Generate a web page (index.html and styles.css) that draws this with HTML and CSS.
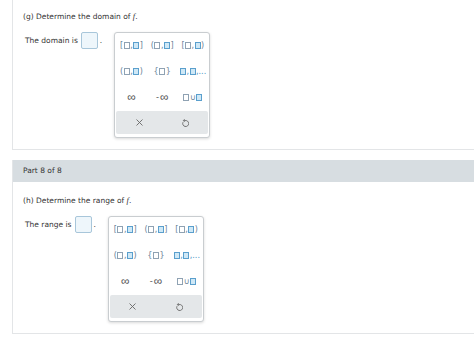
FILE: index.html
```html
<!DOCTYPE html>
<html lang="en">
<head>
  <meta charset="UTF-8">
  <title>Part 8 of 8</title>
  <link rel="stylesheet" href="styles.css">
</head>
<body>
  <div class="card cut">
    <div class="inner">
      <p class="q">(g) Determine the domain of <i>f</i>.</p>
      <div class="ans">
        <span class="lbl">The domain is</span><span class="inp"></span><span class="dot">.</span>
        <div class="pad">
          <div class="grid">
            <span class="sym">[<i class="bx"></i>,<i class="bx on"></i>]</span>
            <span class="sym">(<i class="bx"></i>,<i class="bx on"></i>]</span>
            <span class="sym">[<i class="bx"></i>,<i class="bx on"></i>)</span>
            <span class="sym">(<i class="bx"></i>,<i class="bx on"></i>)</span>
            <span class="sym">{<i class="bx"></i>}</span>
            <span class="sym blue"><i class="bx on"></i>,<i class="bx on"></i>,...</span>
            <span class="sym inf">&infin;</span>
            <span class="sym inf"><span class="minus">-</span>&infin;</span>
            <span class="sym"><i class="bx"></i>&cup;<i class="bx on"></i></span>
          </div>
          <div class="bar">
            <span class="btn">
              <svg width="7" height="7" viewBox="0 0 7 7"><path d="M0.5 0.5L6.5 6.5M6.5 0.5L0.5 6.5" stroke="#666" stroke-width="0.9" fill="none"/></svg>
            </span>
            <span class="btn">
              <svg width="8" height="9" viewBox="0 0 8 9"><path d="M2 4.2A3 3 0 1 0 4 2.6H2.6" stroke="#666" stroke-width="0.9" fill="none"/><path d="M3.6 1.2L2.4 2.6L3.6 3.9" stroke="#666" stroke-width="0.9" fill="none"/></svg>
            </span>
          </div>
        </div>
      </div>
    </div>
  </div>

  <div class="card">
    <div class="head">Part 8 of 8</div>
    <div class="inner">
      <p class="q">(h) Determine the range of <i>f</i>.</p>
      <div class="ans">
        <span class="lbl">The range is</span><span class="inp"></span><span class="dot">.</span>
        <div class="pad">
          <div class="grid">
            <span class="sym">[<i class="bx"></i>,<i class="bx on"></i>]</span>
            <span class="sym">(<i class="bx"></i>,<i class="bx on"></i>]</span>
            <span class="sym">[<i class="bx"></i>,<i class="bx on"></i>)</span>
            <span class="sym">(<i class="bx"></i>,<i class="bx on"></i>)</span>
            <span class="sym">{<i class="bx"></i>}</span>
            <span class="sym blue"><i class="bx on"></i>,<i class="bx on"></i>,...</span>
            <span class="sym inf">&infin;</span>
            <span class="sym inf"><span class="minus">-</span>&infin;</span>
            <span class="sym"><i class="bx"></i>&cup;<i class="bx on"></i></span>
          </div>
          <div class="bar">
            <span class="btn">
              <svg width="7" height="7" viewBox="0 0 7 7"><path d="M0.5 0.5L6.5 6.5M6.5 0.5L0.5 6.5" stroke="#666" stroke-width="0.9" fill="none"/></svg>
            </span>
            <span class="btn">
              <svg width="8" height="9" viewBox="0 0 8 9"><path d="M2 4.2A3 3 0 1 0 4 2.6H2.6" stroke="#666" stroke-width="0.9" fill="none"/><path d="M3.6 1.2L2.4 2.6L3.6 3.9" stroke="#666" stroke-width="0.9" fill="none"/></svg>
            </span>
          </div>
        </div>
      </div>
    </div>
  </div>
</body>
</html>
```

FILE: styles.css
```css
body {
  margin: 0;
  background-color: #ffffff;
  font-family: "DejaVu Sans", Verdana, sans-serif;
  font-size: 7.5px;
  color: #333333;
}
.card {
  margin-left: 12px;
  width: 461px;
  border: 1px solid #e3e5e7;
  border-right: none;
  margin-bottom: 10px;
}
.card.cut {
  border-top: none;
}
.inner {
  padding: 11px 10px 11px 10px;
}
.card .head + .inner {
  padding-top: 13px;
}
.head {
  background-color: #d7dde1;
  height: 22px;
  line-height: 22px;
  padding-left: 10px;
  margin-top: -1px;
}
.q {
  margin: 0;
  line-height: 10px;
}
.q i {
  font-family: "Liberation Serif", serif;
  font-size: 8.5px;
}
.ans {
  display: flex;
  align-items: flex-start;
  margin-top: 10px;
  padding-left: 2px;
}
.lbl {
  line-height: 17px;
  margin-right: 3px;
}
.inp {
  width: 15px;
  height: 15px;
  border: 1px solid #a8c6da;
  background-color: #eef6fb;
  border-radius: 2px;
}
.dot {
  line-height: 17px;
  margin-left: 2px;
}
.pad {
  margin-left: 12px;
  width: 92px;
  border: 1px solid #c9cdd0;
  border-radius: 3px;
  padding: 0 1px 3px 1px;
  box-shadow: 0 1px 3px rgba(0, 0, 0, 0.15);
  background-color: #ffffff;
}
.grid {
  display: grid;
  grid-template-columns: repeat(3, 1fr);
  grid-template-rows: 25px 26px 26px;
}
.sym {
  display: flex;
  align-items: center;
  justify-content: center;
  color: #6a8197;
  font-size: 8px;
}
.sym.inf {
  color: #555555;
  font-family: "Liberation Sans", sans-serif;
  font-size: 12px;
  line-height: 1;
}
.minus {
  font-size: 9px;
  margin-right: 1px;
}
.sym.blue {
  color: #4b95c6;
}
.bx {
  display: inline-block;
  width: 4px;
  height: 5px;
  border: 1px solid #8fa2b3;
  margin: 0 0.5px;
}
.bx.on {
  background-color: #cfe8f6;
  border-color: #5a9fcd;
}
.bar {
  display: flex;
  margin-top: 1px;
  height: 23px;
  background-color: #e4e7e9;
  border-radius: 2px;
}
.btn {
  flex: 1;
  display: flex;
  align-items: center;
  justify-content: center;
}
```
